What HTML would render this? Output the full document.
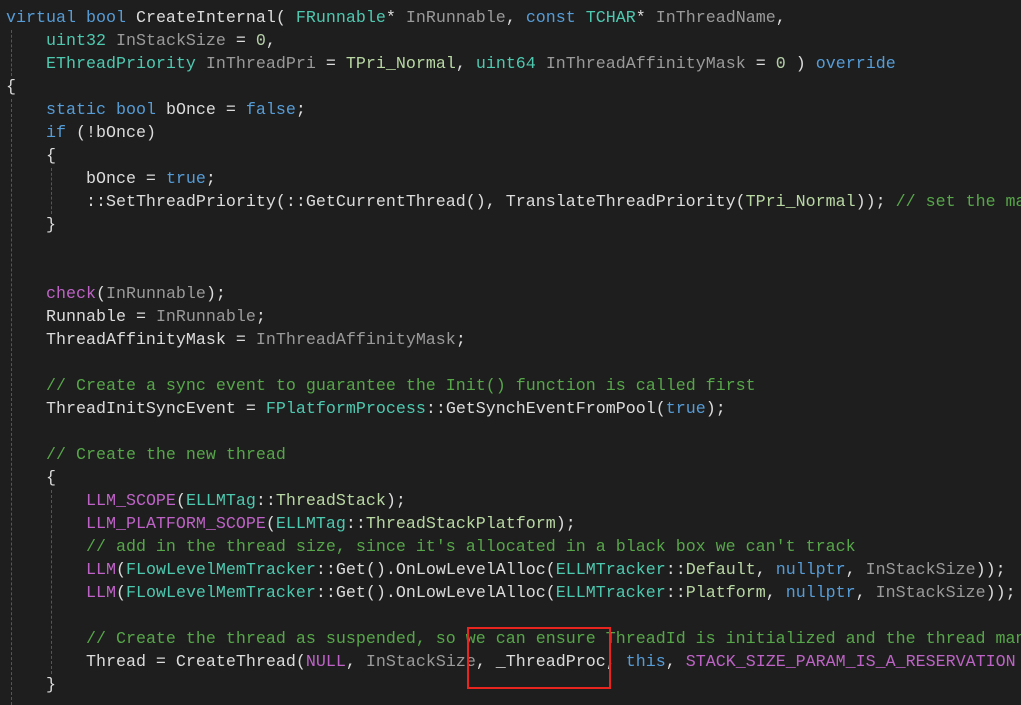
<!DOCTYPE html>
<html><head><meta charset="utf-8"><style>
html,body{margin:0;padding:0;background:#1e1e1e;width:1021px;height:705px;overflow:hidden}
pre{position:absolute;left:6px;top:7px;width:1015px;height:698px;overflow:hidden;margin:0;font-family:"Liberation Mono",monospace;font-size:16.67px;line-height:23px;color:#dcdcdc;white-space:pre}
.k{color:#569cd6}.t{color:#4ec9b0}.p{color:#9a9a9a}.c{color:#57a64a}.n{color:#b5cea8}.m{color:#bd63c5}.e{color:#b8d7a3}.f{color:#dcdcaa}
.g{position:absolute;width:0;border-left:1px dashed #555}
.box{position:absolute;left:467px;top:627px;width:140px;height:58px;border:2px solid #e8251f}
</style></head><body>
<div class="g" style="left:11px;top:30px;height:46px"></div>
<div class="g" style="left:11px;top:99px;height:606px"></div>
<div class="g" style="left:51px;top:168px;height:46px"></div>
<div class="g" style="left:51px;top:490px;height:184px"></div>
<pre><span class="k">virtual</span> <span class="k">bool</span> CreateInternal( <span class="t">FRunnable</span>* <span class="p">InRunnable</span>, <span class="k">const</span> <span class="t">TCHAR</span>* <span class="p">InThreadName</span>,
    <span class="t">uint32</span> <span class="p">InStackSize</span> = <span class="n">0</span>,
    <span class="t">EThreadPriority</span> <span class="p">InThreadPri</span> = <span class="e">TPri_Normal</span>, <span class="t">uint64</span> <span class="p">InThreadAffinityMask</span> = <span class="n">0</span> ) <span class="k">override</span>
{
    <span class="k">static</span> <span class="k">bool</span> bOnce = <span class="k">false</span>;
    <span class="k">if</span> (!bOnce)
    {
        bOnce = <span class="k">true</span>;
        ::SetThreadPriority(::GetCurrentThread(), TranslateThreadPriority(<span class="e">TPri_Normal</span>)); <span class="c">// set the main thread priority</span>
    }


    <span class="m">check</span>(<span class="p">InRunnable</span>);
    Runnable = <span class="p">InRunnable</span>;
    ThreadAffinityMask = <span class="p">InThreadAffinityMask</span>;

    <span class="c">// Create a sync event to guarantee the Init() function is called first</span>
    ThreadInitSyncEvent = <span class="t">FPlatformProcess</span>::GetSynchEventFromPool(<span class="k">true</span>);

    <span class="c">// Create the new thread</span>
    {
        <span class="m">LLM_SCOPE</span>(<span class="t">ELLMTag</span>::<span class="e">ThreadStack</span>);
        <span class="m">LLM_PLATFORM_SCOPE</span>(<span class="t">ELLMTag</span>::<span class="e">ThreadStackPlatform</span>);
        <span class="c">// add in the thread size, since it's allocated in a black box we can't track</span>
        <span class="m">LLM</span>(<span class="t">FLowLevelMemTracker</span>::Get().OnLowLevelAlloc(<span class="t">ELLMTracker</span>::<span class="e">Default</span>, <span class="k">nullptr</span>, <span class="p">InStackSize</span>));
        <span class="m">LLM</span>(<span class="t">FLowLevelMemTracker</span>::Get().OnLowLevelAlloc(<span class="t">ELLMTracker</span>::<span class="e">Platform</span>, <span class="k">nullptr</span>, <span class="p">InStackSize</span>));

        <span class="c">// Create the thread as suspended, so we can ensure ThreadId is initialized and the thread manager</span>
        Thread = CreateThread(<span class="m">NULL</span>, <span class="p">InStackSize</span>, _ThreadProc, <span class="k">this</span>, <span class="m">STACK_SIZE_PARAM_IS_A_RESERVATION</span> | <span class="m">CREATE_SUSPENDED</span>
    }</pre>
<div class="box"></div>
</body></html>
